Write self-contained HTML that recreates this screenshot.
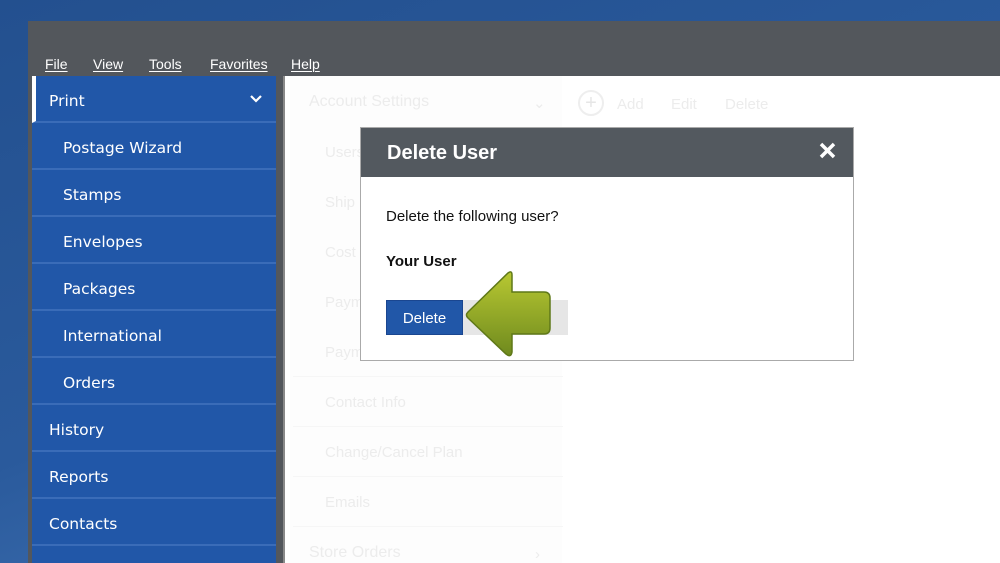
<!DOCTYPE html>
<html><head><style>
*{margin:0;padding:0;box-sizing:border-box}
body{width:1000px;height:563px;overflow:hidden;position:relative;background:linear-gradient(160deg,#23508f 0%,#2a5a9c 50%,#4c7fbf 100%);font-family:"Liberation Sans",sans-serif}
.win{position:absolute;left:28px;top:21px;width:972px;height:542px;background:#53575c}
.menu{position:absolute;top:56px;left:45px;font-size:14px;color:#fff;font-family:"Liberation Sans",sans-serif}
.menu span{position:absolute;white-space:nowrap;text-decoration:underline;text-decoration-thickness:1px;text-underline-offset:2px}
.side{position:absolute;left:32px;top:76px;width:244px;height:487px;background:#2157a8}
.side div{height:47px;border-bottom:2px solid #3a6cb8;color:#fff;font-family:"DejaVu Sans","Liberation Sans",sans-serif;font-size:15.5px;line-height:51px;padding-left:17px}
.side div.sub{padding-left:31px}
.content{position:absolute;left:283px;top:76px;width:717px;height:487px;background:#fff;border-left:2px solid #8a8a8a}
.g{position:absolute;color:#ececec;font-size:15px;white-space:nowrap}
.row{position:absolute;left:8px;width:270px;border-top:1px solid #f6f6f6}
.dlg{position:absolute;left:360px;top:127px;width:494px;height:234px;background:#fff;border:1px solid #aaa}
.hd{height:49px;background:#53595f;color:#fff;font-weight:bold;font-size:20px;line-height:50px;padding-left:26px;position:relative}
</style></head><body>
<div class="win"></div>
<div class="menu"><span style="left:0">File</span><span style="left:48px">View</span><span style="left:104px">Tools</span><span style="left:165px">Favorites</span><span style="left:246px">Help</span></div>
<div class="side">
<div style="border-left:4px solid #fff;padding-left:13px;position:relative">Print<svg style="position:absolute;right:14px;top:19px" width="12" height="8" viewBox="0 0 12 8"><path d="M1 1 L6 6 L11 1" stroke="#fff" stroke-width="2.2" fill="none"/></svg></div>
<div class="sub">Postage Wizard</div><div class="sub">Stamps</div><div class="sub">Envelopes</div><div class="sub">Packages</div><div class="sub">International</div><div class="sub">Orders</div>
<div>History</div><div>Reports</div><div>Contacts</div>
</div>
<div class="content">
<div style="position:absolute;left:5px;top:0;width:272px;height:487px;background:#fdfdfd"></div>
<div class="g" style="left:24px;top:17px;font-size:16px">Account Settings</div>
<div class="g" style="left:248px;top:18px">&#8964;</div>
<div style="position:absolute;left:293px;top:14px;width:26px;height:26px;border:2px solid #eee;border-radius:50%;color:#e6e6e6;text-align:center;line-height:22px;font-size:20px">+</div>
<div class="g" style="left:332px;top:20px">Add</div><div class="g" style="left:386px;top:20px">Edit</div><div class="g" style="left:440px;top:20px">Delete</div>
<div class="g" style="left:40px;top:68px">Users</div><div class="g" style="left:40px;top:118px">Ship</div><div class="g" style="left:40px;top:168px">Cost</div><div class="g" style="left:40px;top:218px">Paym</div><div class="g" style="left:40px;top:268px">Paym</div>
<div class="g" style="left:40px;top:318px">Contact Info</div><div class="g" style="left:40px;top:368px">Change/Cancel Plan</div><div class="g" style="left:40px;top:418px">Emails</div>
<div class="g" style="left:24px;top:468px;font-size:16px">Store Orders</div><div class="g" style="left:250px;top:470px">&#8250;</div>
<div class="row" style="top:300px"></div><div class="row" style="top:350px"></div><div class="row" style="top:400px"></div><div class="row" style="top:450px"></div>
</div>
<div class="dlg">
<div class="hd">Delete User<svg style="position:absolute;right:17px;top:14px" width="17" height="17" viewBox="0 0 17 17"><path d="M2 2 L15 15 M15 2 L2 15" stroke="#fff" stroke-width="3.5"/></svg></div>
<div style="position:absolute;left:25px;top:80px;font-size:15px;color:#111">Delete the following user?</div>
<div style="position:absolute;left:25px;top:125px;font-size:15px;font-weight:bold;color:#111">Your User</div>
<div style="position:absolute;left:101px;top:172px;width:106px;height:35px;background:#e6e6e6"></div>
<div style="position:absolute;left:25px;top:172px;width:77px;height:35px;background:#2157a8;border:1px solid #1a4690;color:#fff;font-size:15px;text-align:center;line-height:36px">Delete</div>
</div>
<svg style="position:absolute;left:464px;top:270px" width="90" height="90" viewBox="0 0 90 90">
<defs><linearGradient id="a" x1="0" y1="0" x2="0" y2="1"><stop offset="0" stop-color="#b8c832"/><stop offset="1" stop-color="#6f8a1e"/></linearGradient></defs>
<path d="M4 42 L44 3 Q48 0 48 5 L48 22 L80 22 Q86 22 86 28 L86 58 Q86 64 80 64 L48 64 L48 82 Q47 88 42 84 L4 48 Q1 45 4 42Z" fill="url(#a)" stroke="#5f7818" stroke-width="1.5"/>
</svg>
</body></html>
